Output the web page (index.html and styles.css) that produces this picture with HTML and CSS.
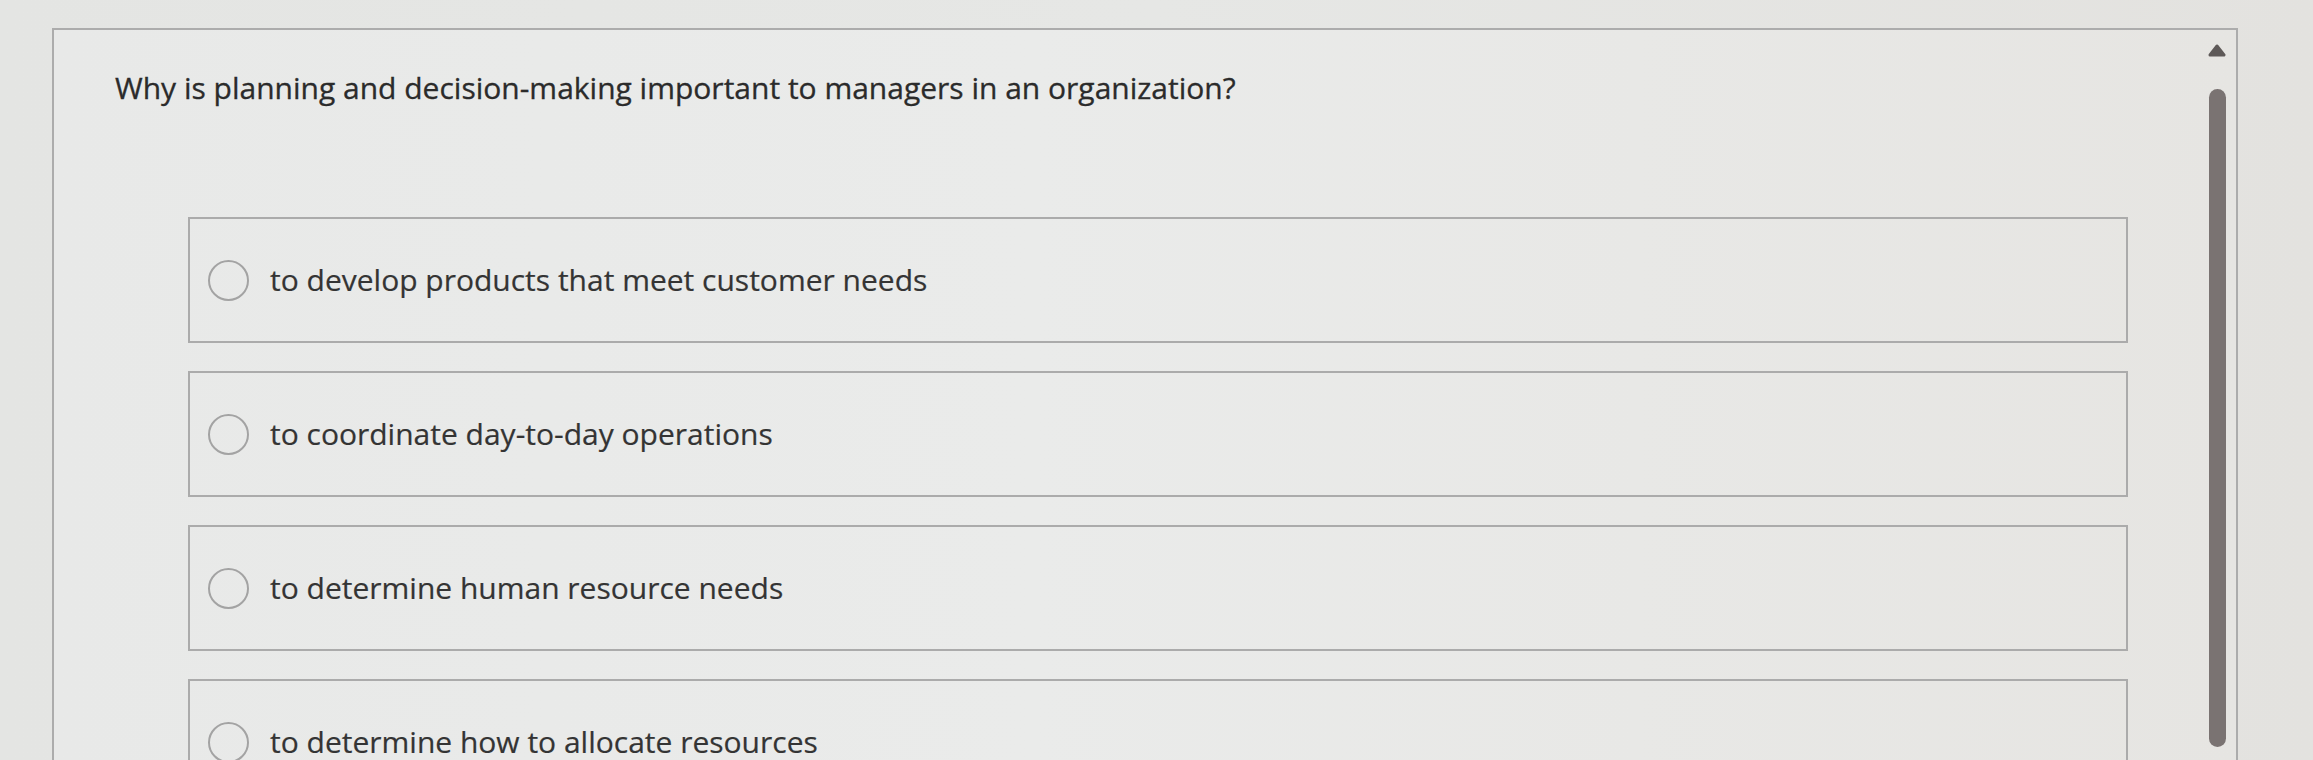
FILE: index.html
```html
<!DOCTYPE html>
<html lang="en">
<head>
<meta charset="utf-8">
<title>Question</title>
<link rel="stylesheet" href="styles.css">
</head>
<body>
<div class="panel">
  <div class="content">
    <p class="question">Why is planning and decision-making important to managers in an organization?</p>
    <div class="options">
      <label class="option"><span class="radio"></span><span class="label">to develop products that meet customer needs</span></label>
      <label class="option"><span class="radio"></span><span class="label">to coordinate day-to-day operations</span></label>
      <label class="option"><span class="radio"></span><span class="label">to determine human resource needs</span></label>
      <label class="option"><span class="radio"></span><span class="label">to determine how to allocate resources</span></label>
    </div>
  </div>
  <div class="scrollbar">
    <svg class="arrow" width="18" height="13" viewBox="0 0 18 13"><path d="M9 2 L16 11 L2 11 Z" fill="#5e5958" stroke="#5e5958" stroke-width="3" stroke-linejoin="round"/></svg>
    <div class="thumb"></div>
  </div>
</div>
</body>
</html>
```
FILE: styles.css
```css
html, body {
  margin: 0;
  padding: 0;
}
body {
  width: 2313px;
  height: 760px;
  overflow: hidden;
  background: linear-gradient(90deg, #e4e5e3 0%, #e6e7e5 50%, #e3e2df 100%);
  font-family: "Open Sans", "Liberation Sans", sans-serif;
  color: #3b3b3b;
}
.panel {
  margin: 28px 0 0 52px;
  width: 2186px;
  height: 800px;
  box-sizing: border-box;
  border: 2px solid #acacac;
  border-bottom: none;
  background: linear-gradient(90deg, #e8e9e8 0%, #eaebea 45%, #e6e5e2 100%);
  display: flex;
}
.content {
  flex: 1;
}
.question {
  margin: 38px 0 0 61px;
  font-size: 30px;
  line-height: 40px;
  color: #2b2b2b;
  -webkit-text-stroke: 0.3px #2b2b2b;
}
.options {
  margin: 109px 80px 0 134px;
  display: flex;
  flex-direction: column;
  gap: 28px;
}
.option {
  height: 126px;
  box-sizing: border-box;
  border: 2px solid #ababab;
  display: flex;
  align-items: center;
  padding-left: 18px;
  gap: 21px;
}
.radio {
  width: 41px;
  height: 41px;
  box-sizing: border-box;
  border: 2px solid #a3a3a3;
  border-radius: 50%;
  flex: none;
}
.label {
  font-size: 30px;
  line-height: 40px;
  color: #343434;
  -webkit-text-stroke: 0.2px #343434;
}
.scrollbar {
  width: 18px;
  margin-right: 10px;
  padding-top: 14px;
  display: flex;
  flex-direction: column;
  align-items: center;
  gap: 32px;
}
.arrow {
  display: block;
}
.thumb {
  width: 17px;
  height: 658px;
  border-radius: 9px;
  background: #7a7372;
}
```
